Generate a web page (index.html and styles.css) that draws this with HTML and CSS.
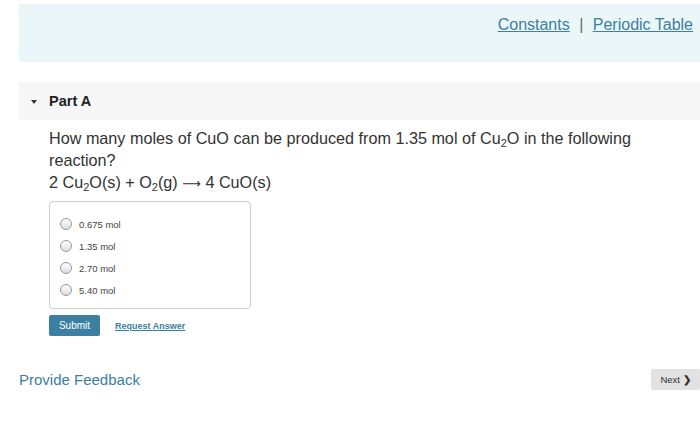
FILE: index.html
```html
<!DOCTYPE html>
<html lang="en">
<head>
  <meta charset="UTF-8" />
  <title>Part A</title>
  <link rel="stylesheet" href="styles.css">
</head>
<body>
  <div class="intro">
    <div class="links">
      <a href="#">Constants</a>
      <span class="sep">|</span>
      <a href="#">Periodic Table</a>
    </div>
  </div>

  <div class="part-head">
    <span class="caret"></span>
    <span class="part-title">Part A</span>
  </div>

  <div class="part-body">
    <p class="question">
      How many moles of CuO can be produced from 1.35 mol of Cu<sub>2</sub>O in the following<br>
      reaction?<br>
      2 Cu<sub>2</sub>O(s) + O<sub>2</sub>(g) <span class="arrow">&#x27F6;</span> 4 CuO(s)
    </p>

    <div class="options">
      <label class="option"><span class="radio"></span>0.675 mol</label>
      <label class="option"><span class="radio"></span>1.35 mol</label>
      <label class="option"><span class="radio"></span>2.70 mol</label>
      <label class="option"><span class="radio"></span>5.40 mol</label>
    </div>

    <div class="actions">
      <button class="submit">Submit</button>
      <a href="#" class="request">Request Answer</a>
    </div>
  </div>

  <div class="footer">
    <a href="#" class="feedback">Provide Feedback</a>
    <button class="next">Next <span class="chev">&#x276F;</span></button>
  </div>
</body>
</html>
```

FILE: styles.css
```css
body {
  margin: 0;
  padding: 4px 0 0 19px;
  background: #fff;
  color: #333;
  font-family: 'Liberation Sans', Arial, sans-serif;
}

a {
  color: #3b7fa3;
}

.intro {
  background: #eaf6f8;
  height: 58px;
  display: flex;
  justify-content: flex-end;
  padding-right: 7px;
}

.links {
  font-size: 16px;
  margin-top: 12px;
}

.links .sep {
  color: #666;
  margin: 0 5px;
}

.part-head {
  margin-top: 20px;
  background: #f7f7f7;
  height: 38px;
  display: flex;
  align-items: center;
}

.caret {
  width: 0;
  height: 0;
  border-left: 3px solid transparent;
  border-right: 3px solid transparent;
  border-top: 4px solid #333;
  margin: 2px 12px 0 12px;
}

.part-title {
  font-size: 14.5px;
  font-weight: bold;
  color: #222;
}

.part-body {
  padding-left: 30px;
}

.question {
  margin: 7px 0 0;
  font-size: 16.2px;
  line-height: 22px;
}

.question sub {
  font-size: 11px;
  vertical-align: -3px;
  line-height: 1;
}

.arrow {
  font-family: 'DejaVu Sans', sans-serif;
  font-size: 13px;
}

.options {
  margin-top: 6px;
  width: 202px;
  height: 108px;
  border: 1px solid #ccc;
  border-radius: 4px;
  padding: 11px 0 0 10px;
  box-sizing: border-box;
}

.option {
  display: flex;
  align-items: center;
  height: 22px;
  font-size: 9.5px;
  color: #444;
}

.radio {
  width: 10px;
  height: 10px;
  border: 1px solid #999;
  border-radius: 50%;
  background: linear-gradient(#fff, #ddd);
  margin-right: 7px;
}

.actions {
  margin-top: 6px;
  display: flex;
  align-items: center;
}

.submit {
  background: #3b7fa3;
  color: #fff;
  border: none;
  border-radius: 2px;
  width: 51px;
  height: 21px;
  font-family: inherit;
  font-size: 10px;
  padding: 0;
}

.request {
  margin-left: 15px;
  font-size: 9px;
  font-weight: bold;
}

.footer {
  margin-top: 33px;
  display: flex;
  justify-content: space-between;
  align-items: center;
}

.feedback {
  font-size: 15px;
  text-decoration: none;
}

.next {
  background: #e2e2e2;
  border: none;
  border-radius: 2px;
  width: 49px;
  height: 21px;
  font-family: inherit;
  font-size: 9.5px;
  color: #333;
  padding: 0;
}

.next .chev {
  font-weight: bold;
}
```
